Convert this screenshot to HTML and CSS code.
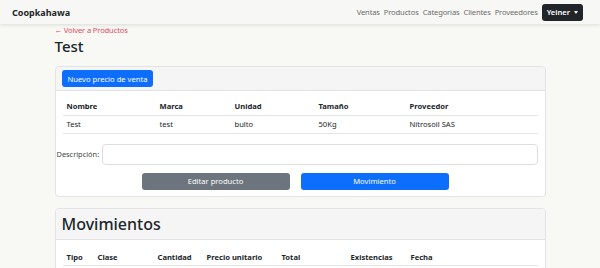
FILE: index.html
```html
<!DOCTYPE html>
<html lang="es">
<head>
    <meta charset="UTF-8" />
    <meta name="viewport" content="width=device-width, initial-scale=1.0" />
    <title>Test - Coopkahawa</title>
    <link rel="stylesheet" href="styles.css">
</head>
<body>
    <nav class="navbar">
        <a class="brand" href="#">Coopkahawa</a>
        <div class="nav-links">
            <a href="#">Ventas</a>
            <a href="#">Productos</a>
            <a href="#">Categorias</a>
            <a href="#">Clientes</a>
            <a href="#">Proveedores</a>
            <button class="user-btn">Yeiner <span class="caret"></span></button>
        </div>
    </nav>

    <main class="container">
        <a class="back-link" href="#">&larr; Volver a Productos</a>
        <h1>Test</h1>

        <!-- Producto -->
        <div class="card">
            <div class="card-header">
                <button class="btn btn-blue btn-sm">Nuevo precio de venta</button>
            </div>
            <div class="card-body">
                <table class="product-table">
                    <tr>
                        <th class="c-nombre">Nombre</th>
                        <th class="c-marca">Marca</th>
                        <th class="c-unidad">Unidad</th>
                        <th class="c-tamano">Tamaño</th>
                        <th>Proveedor</th>
                    </tr>
                    <tr>
                        <td>Test</td>
                        <td>test</td>
                        <td>bulto</td>
                        <td>50Kg</td>
                        <td>Nitrosoil SAS</td>
                    </tr>
                </table>

                <div class="desc-row">
                    <label for="descripcion">Descripción:</label>
                    <textarea id="descripcion" rows="1"></textarea>
                </div>

                <div class="actions">
                    <button class="btn btn-gray">Editar producto</button>
                    <button class="btn btn-blue">Movimiento</button>
                </div>
            </div>
        </div>

        <!-- Movimientos -->
        <div class="card">
            <div class="card-header">
                <h2>Movimientos</h2>
            </div>
            <div class="card-body">
                <table class="moves-table">
                    <tr>
                        <th class="m-tipo">Tipo</th>
                        <th class="m-clase">Clase</th>
                        <th class="m-cantidad">Cantidad</th>
                        <th class="m-precio">Precio unitario</th>
                        <th class="m-total">Total</th>
                        <th class="m-exist">Existencias</th>
                        <th>Fecha</th>
                    </tr>
                </table>
            </div>
        </div>
    </main>
</body>
</html>
```

FILE: styles.css
```css
* {
    box-sizing: border-box;
}

body {
    font-family: 'Noto Sans', 'Open Sans', sans-serif;
    margin: 0;
    padding: 0;
    background: #f8f8f4;
    color: #212529;
    font-size: 8px;
}

a {
    text-decoration: none;
}

button {
    font-family: inherit;
    cursor: pointer;
}

.navbar {
    display: flex;
    align-items: center;
    justify-content: space-between;
    height: 24px;
    padding: 0 17px 0 12px;
    background: #f7f7f5;
    box-shadow: 0 1px 4px rgba(0, 0, 0, 0.12);
    position: relative;
}

.brand {
    color: #212529;
    font-weight: 700;
    font-size: 9px;
}

.nav-links {
    display: flex;
    align-items: center;
}

    .nav-links a {
        color: #6c6c6c;
        font-size: 7.6px;
        letter-spacing: -0.15px;
        margin-right: 4px;
    }

.user-btn {
    height: 17px;
    padding: 0 5px;
    background: #212529;
    color: white;
    border: none;
    border-radius: 3px;
    font-size: 7.6px;
    font-weight: 600;
    display: flex;
    align-items: center;
    gap: 4px;
}

.caret {
    width: 0;
    height: 0;
    border-left: 2.5px solid transparent;
    border-right: 2.5px solid transparent;
    border-top: 3px solid white;
}

.container {
    max-width: 491px;
    margin: 0 auto;
}

.back-link {
    display: block;
    color: #e04a5c;
    font-size: 7.6px;
    letter-spacing: -0.15px;
    margin-top: 1px;
    line-height: 11px;
}

h1 {
    font-size: 15px;
    font-weight: 500;
    margin: 0 0 10px;
    line-height: 20px;
}

.card {
    background: white;
    border: 1px solid #e3e3e3;
    border-radius: 4px;
    margin-bottom: 11px;
    overflow: hidden;
}

.card-header {
    background: #f5f5f5;
    border-bottom: 1px solid #e3e3e3;
    padding: 3px 6px;
}

    .card-header h2 {
        margin: 0;
        font-size: 16px;
        font-weight: 500;
        line-height: 24px;
    }

.card-body {
    padding: 6px 7px 6px;
}

.btn {
    border: none;
    border-radius: 3px;
    color: white;
    font-size: 7.6px;
    height: 17px;
}

.btn-sm {
    padding: 0 6px;
}

.btn-blue {
    background: #0d6efd;
}

.btn-gray {
    background: #6c757d;
}

table {
    width: 100%;
    border-collapse: collapse;
}

th, td {
    text-align: left;
    padding: 0 4px;
    height: 18px;
    font-size: 7.6px;
    border-bottom: 1px solid #e5e5e5;
}

th {
    font-weight: 700;
}

.c-nombre { width: 93px; }
.c-marca { width: 75px; }
.c-unidad { width: 84px; }
.c-tamano { width: 91px; }

.moves-table th {
    height: 20px;
    padding-top: 3px;
}

.m-tipo { width: 31px; }
.m-clase { width: 60px; }
.m-cantidad { width: 49px; }
.m-precio { width: 75px; }
.m-total { width: 69px; }
.m-exist { width: 60px; }

.desc-row {
    display: flex;
    align-items: center;
    margin: 10px 0 0 -6px;
}

    .desc-row label {
        width: 45px;
        font-size: 7.4px;
        color: #444;
    }

    .desc-row textarea {
        flex: 1;
        height: 21px;
        border: 1px solid #dedede;
        border-radius: 4px;
        resize: none;
    }

.actions {
    display: flex;
    gap: 11px;
    margin-top: 8px;
    padding-left: 79px;
}

    .actions .btn {
        width: 148px;
    }
```
